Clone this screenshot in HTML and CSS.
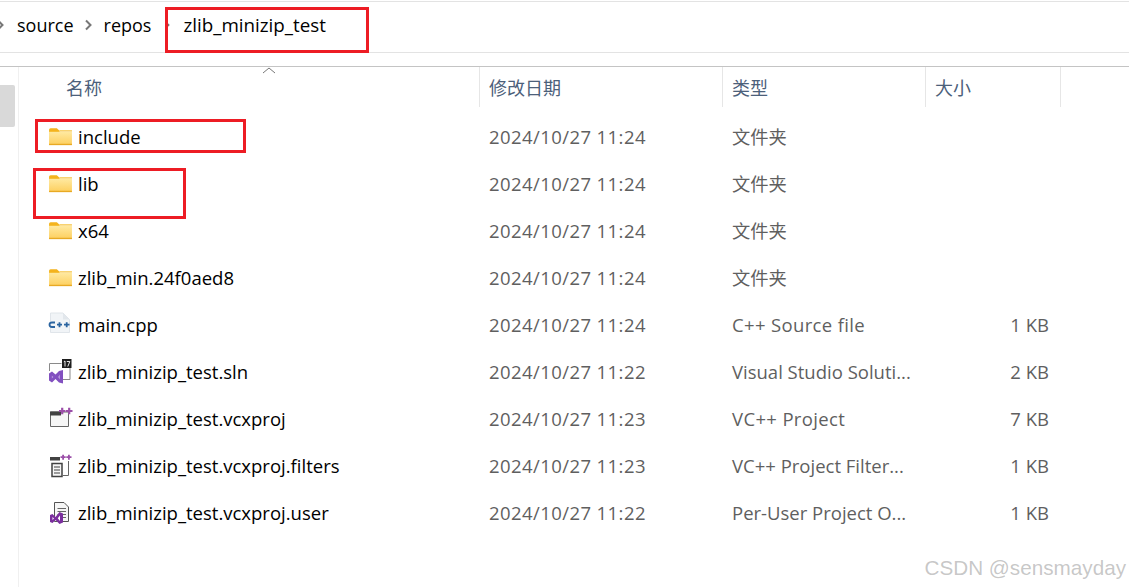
FILE: index.html
```html
<!DOCTYPE html>
<html lang="zh">
<head>
<meta charset="utf-8">
<title>zlib_minizip_test</title>
<link rel="stylesheet" href="styles.css">
</head>
<body>
<svg class="defs" width="0" height="0" aria-hidden="true">
  <defs>
    <linearGradient id="fg" x1="0" y1="0" x2="0" y2="1"><stop offset="0" stop-color="#ffe9a0"/><stop offset="1" stop-color="#fdcf5e"/></linearGradient>
    <symbol id="folder" viewBox="0 0 24 20">
      <path d="M1 3.5Q1 2 2.5 2H8.5L11 4.5V8H1Z" fill="#f4b31d"/>
      <path d="M1 5.5H23V18H1Z" fill="url(#fg)"/>
      <path d="M1 17H23V18.3H1Z" fill="#e8a923"/>
      <path d="M1 5H10L11.5 4H23V5.3H1Z" fill="#f6c342"/>
    </symbol>
  </defs>
</svg>
<nav class="crumbs">
  <svg class="chev chev-first" viewBox="0 0 8 12"><path d="M1 1.5 5.5 6 1 10.5" /></svg>
  <span class="crumb">source</span>
  <svg class="chev" viewBox="0 0 8 12"><path d="M1 1.5 5.5 6 1 10.5" /></svg>
  <span class="crumb">repos</span>
  <svg class="chev chev-small" viewBox="0 0 8 12"><path d="M1 1.5 5.5 6 1 10.5" /></svg>
  <span class="crumb crumb-last">zlib_minizip_test</span>
</nav>
<main class="body">
  <aside class="pane"><div class="thumb"></div></aside>
  <section class="list">
    <div class="sort"><svg viewBox="0 0 14 7"><path d="M1 6 7 1 13 6"/></svg></div>
    <header class="row head">
      <div class="cell name-head">名称</div>
      <div class="cell sep">修改日期</div>
      <div class="cell sep">类型</div>
      <div class="cell sep">大小</div>
      <div class="cell sep end"></div>
    </header>
    <div class="rows">
      <div class="row item"><div class="cell name"><svg class="ic"><use href="#folder"/></svg><span>include</span></div><div class="cell meta date">2024/10/27 11:24</div><div class="cell meta cjk">文件夹</div><div class="cell size"></div></div>
      <div class="row item"><div class="cell name"><svg class="ic"><use href="#folder"/></svg><span>lib</span></div><div class="cell meta date">2024/10/27 11:24</div><div class="cell meta cjk">文件夹</div><div class="cell size"></div></div>
      <div class="row item"><div class="cell name"><svg class="ic"><use href="#folder"/></svg><span>x64</span></div><div class="cell meta date">2024/10/27 11:24</div><div class="cell meta cjk">文件夹</div><div class="cell size"></div></div>
      <div class="row item"><div class="cell name"><svg class="ic"><use href="#folder"/></svg><span>zlib_min.24f0aed8</span></div><div class="cell meta date">2024/10/27 11:24</div><div class="cell meta cjk">文件夹</div><div class="cell size"></div></div>
      <div class="row item"><div class="cell name">
        <svg class="ic ic-wide" viewBox="0 0 25 25"><path d="M2.500 1H15L21.500 7.500V20.500H2.500Z" fill="#f1f4f7" stroke="#e0e5ea"/><path d="M15 1V7.500H21.500" fill="#e2e7ec"/><path d="M7 10.500H4Q1.500 10.500 1.500 12.700T4 15H7" fill="none" stroke="#2a64a0" stroke-width="1.800"/><path d="M9 12.700H14M11.500 10.200V15.200M16 12.700H21.500M18.700 10.200V15.200" stroke="#2a64a0" stroke-width="1.800"/></svg>
        <span>main.cpp</span></div><div class="cell meta date">2024/10/27 11:24</div><div class="cell meta type">C++ Source file</div><div class="cell size">1 KB</div></div>
      <div class="row item"><div class="cell name">
        <svg class="ic ic-wide" viewBox="0 0 25 25"><path d="M1.500 12V4.500H13.500M22 9V20.500H14" fill="none" stroke="#8a8a8a"/><path d="M1 14.500 4 12.500 7.500 15.500 11 12 15 11V24.500L11 23.500 7.500 20 4 23.500 1 21.500Z" fill="#8250c0"/><path d="M3.800 16.500 5.500 18 3.800 19.500ZM12 15.500V20.500L10 18Z" fill="#b795de"/><rect x="14" y="0" width="9.500" height="9" fill="#1e1e1e"/><path d="M15.800 2.800 17 2V7.500M18.800 2.500H21.800L19.800 7.500" fill="none" stroke="#fff" stroke-width=".9"/></svg>
        <span>zlib_minizip_test.sln</span></div><div class="cell meta date">2024/10/27 11:22</div><div class="cell meta"><span class="clip">Visual Studio Soluti...</span></div><div class="cell size">2 KB</div></div>
      <div class="row item"><div class="cell name">
        <svg class="ic ic-wide" viewBox="0 0 25 25"><path d="M2.500 6H20.500V20.500H2.500Z" fill="#f6f6f6" stroke="#666"/><rect x="2" y="5.500" width="11" height="4" fill="#424242"/><path d="M11 5H17.500M14.200 1.800V8.200M18 5H24.500M21.200 1.800V8.200" stroke="#9b4fa8" stroke-width="2.200"/></svg>
        <span>zlib_minizip_test.vcxproj</span></div><div class="cell meta date">2024/10/27 11:23</div><div class="cell meta type">VC++ Project</div><div class="cell size">7 KB</div></div>
      <div class="row item"><div class="cell name">
        <svg class="ic ic-wide" viewBox="0 0 25 25"><path d="M3 5H12M20.500 8V22.500H15" fill="none" stroke="#666"/><rect x="2" y="4" width="10" height="3.500" fill="#424242"/><path d="M4 10.500H14V23.500H4Z" fill="#f6f6f6" stroke="#424242" stroke-width="1.500"/><path d="M6 14H12M6 17H12M6 20H12" stroke="#424242"/><path d="M12.500 4.200H17.700M15.100 1.700V6.700M18.300 4.200H23.500M20.900 1.700V6.700" stroke="#9b4fa8" stroke-width="1.800"/></svg>
        <span>zlib_minizip_test.vcxproj.filters</span></div><div class="cell meta date">2024/10/27 11:23</div><div class="cell meta"><span class="clip">VC++ Project Filter...</span></div><div class="cell size">1 KB</div></div>
      <div class="row item"><div class="cell name">
        <svg class="ic ic-wide" viewBox="0 0 25 25"><path d="M6.500 2.500H16L20.500 7V21.500H6.500Z" fill="#f6f6f6" stroke="#555"/><path d="M9.500 8.500H18M9.500 11.500H18M9.500 14.500H18M14.500 17.500H18" stroke="#666" stroke-width="1.200"/><path d="M2 15 4.500 14 7.500 17 11.500 12 15 13.500V22.500L11.500 24 7.500 20 4.500 23 2 22Z" fill="#7b2f9e"/><path d="M4.500 17 6 18.500 4.500 20ZM12 15.500V21L9.800 18.300Z" fill="#fff"/></svg>
        <span>zlib_minizip_test.vcxproj.user</span></div><div class="cell meta date">2024/10/27 11:22</div><div class="cell meta"><span class="clip">Per-User Project O...</span></div><div class="cell size">1 KB</div></div>
    </div>
  </section>
</main>
<div class="mark m1"></div>
<div class="mark m2"></div>
<div class="mark m3"></div>
<div class="watermark">CSDN @sensmayday</div>
</body>
</html>
```
FILE: styles.css
```css
html, body { margin: 0; padding: 0; background: #fff; }
body {
  width: 1129px; height: 587px; overflow: hidden; position: relative;
  font-family: "Open Sans", "Noto Sans CJK SC", sans-serif;
  font-size: 18.5px; color: #000;
}
.defs { position: absolute; }
.crumbs {
  box-sizing: border-box; height: 52px; margin-top: 1px;
  border-top: 1px solid #e3e3e3; border-bottom: 1px solid #e3e3e3;
  display: flex; align-items: center; padding-bottom: 4px; overflow: hidden;
}
.chev { width: 8px; height: 12px; fill: none; stroke: #777; stroke-width: 2; flex: none; margin: 0 11px 0 11px; }
.chev-first { margin: 0 12px 0 -3px; }
.chev-small { width: 5px; height: 8px; stroke-width: 3; margin: 0 13px 0 14px; }
.crumb { line-height: 24px; white-space: nowrap; font-size: 18px; }
.crumb-last { font-size: 18.8px; }
.body {
  margin-top: 13px; border-top: 1px solid #c4c4c4; display: flex; height: 521px;
}
.pane { width: 18px; flex: none; border-right: 1px solid #f0f0f0; }
.thumb { width: 15px; height: 42px; margin-top: 18px; background: #d9d9d9; border-radius: 0 2px 2px 0; }
.list { flex: 1; position: relative; }
.sort { position: absolute; left: 243px; top: 0; width: 14px; height: 7px; }
.sort svg { display: block; width: 14px; height: 7px; fill: none; stroke: #777; }
.row { display: grid; grid-template-columns: 460px 243px 203px 135px 68px; }
.head { height: 40px; color: #4c607a; }
.head .cell { display: flex; align-items: center; padding-left: 9px; padding-bottom: 1px; box-sizing: border-box; font-size: 18px; }
.head .name-head { padding-left: 47px; }
.sep { border-left: 1px solid #e6e6e6; }
.end { height: 40px; }
.rows { padding-top: 6px; }
.item { height: 47px; align-items: center; }
.name { display: flex; align-items: center; padding-left: 29px; line-height: 24px; font-size: 18.5px; }
.name span { margin-left: 5px; white-space: nowrap; }
.ic { width: 25px; height: 21px; flex: none; }
.ic-wide { width: 25px; height: 25px; }
.meta { color: #5f5f5f; padding-left: 10px; white-space: nowrap; }
.date { letter-spacing: .42px; }
.type { letter-spacing: .35px; }
.cjk { font-size: 18.3px; padding-bottom: 2px; }
.size { color: #5f5f5f; text-align: right; padding-right: 11px; }
.mark { position: absolute; border: 3px solid #ed1c24; box-sizing: border-box; }
.m1 { left: 165px; top: 7px; width: 204px; height: 46px; }
.m2 { left: 35px; top: 119px; width: 211px; height: 34px; }
.m3 { left: 33px; top: 168px; width: 153px; height: 51px; }
.watermark {
  position: absolute; right: 3px; bottom: 7px;
  font-family: "Liberation Sans", sans-serif; font-size: 20.7px; color: rgba(120,120,120,.42);
}
```
